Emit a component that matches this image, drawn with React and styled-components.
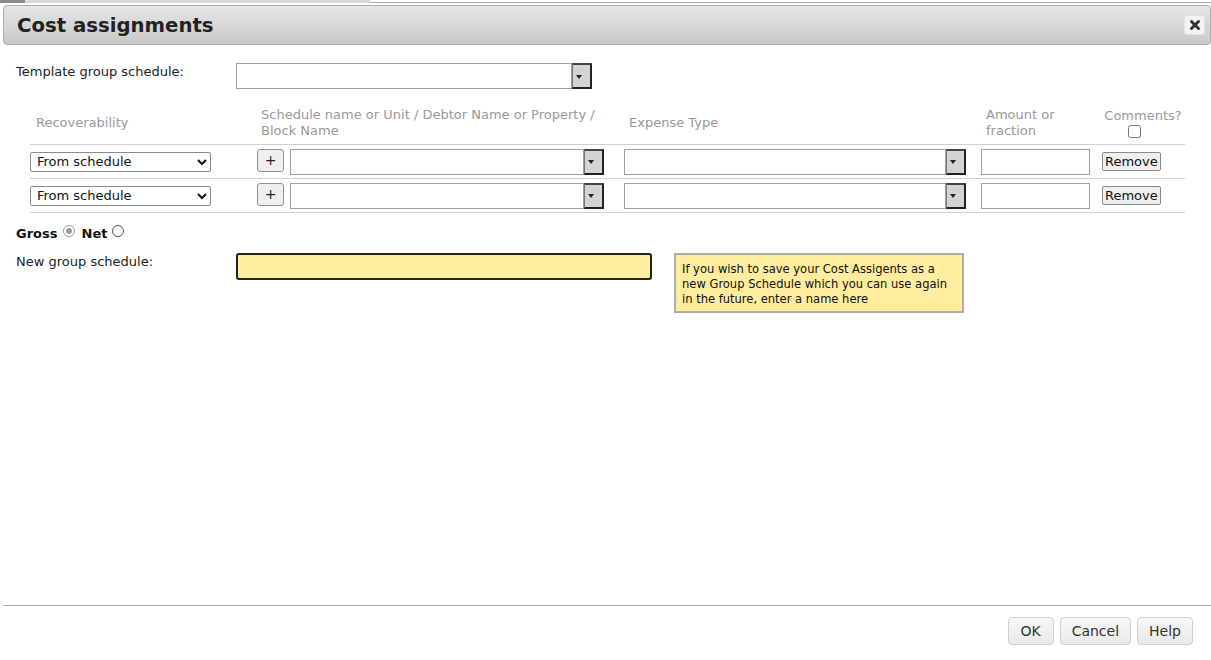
import React from 'react'
import styled, { createGlobalStyle } from 'styled-components';

const GlobalStyle = createGlobalStyle`
  html, body {
    margin: 0;
    padding: 0;
    background: #fff;
  }
  body {
    font-family: "DejaVu Sans", Verdana, sans-serif;
    font-size: 13px;
    color: #222;
  }
`

const recoverRows = [1, 2];

const Combo = ({ width }) => (
    <ComboWrap>
        <ComboInput $w={width} />
        <ComboButton><Arrow /></ComboButton>
    </ComboWrap>
)

const App = () => {
    return (
        <Page>
            <GlobalStyle />
            <TopStrip>
                <StripDark />
                <StripLight />
                <StripRest />
            </TopStrip>
            <TitleBar>
                <Title>Cost assignments</Title>
                <CloseButton aria-label="close">
                    <svg width="12" height="12" viewBox="0 0 12 12">
                        <path d="M2.5 2.5 L9.5 9.5 M9.5 2.5 L2.5 9.5" stroke="#333" strokeWidth="3" strokeLinecap="round" />
                    </svg>
                </CloseButton>
            </TitleBar>

            <Body>
                <FieldRow>
                    <FieldLabel>Template group schedule:</FieldLabel>
                    <Combo width={336} />
                </FieldRow>

                <Grid>
                    <HeadCell $pl={6}><span>Recoverability</span></HeadCell>
                    <HeadCell $pl={4}><span>Schedule name or Unit / Debtor Name or Property /<br />Block Name</span></HeadCell>
                    <HeadCell $pl={5}><span>Expense Type</span></HeadCell>
                    <HeadCell $pl={5}><span>Amount or<br />fraction</span></HeadCell>
                    <CommentsHead>
                        Comments?
                        <CheckBox type="checkbox" />
                    </CommentsHead>

                    {recoverRows.map((r) => (
                        <React.Fragment key={r}>
                            <Cell>
                                <RecoverSelect defaultValue="schedule">
                                    <option value="schedule">From schedule</option>
                                    <option value="none">Non-recoverable</option>
                                </RecoverSelect>
                            </Cell>
                            <Cell>
                                <PlusButton>+</PlusButton>
                                <Combo width={294} />
                            </Cell>
                            <Cell>
                                <Combo width={322} />
                            </Cell>
                            <Cell>
                                <AmountInput />
                            </Cell>
                            <Cell>
                                <RemoveButton>Remove</RemoveButton>
                            </Cell>
                        </React.Fragment>
                    ))}
                </Grid>

                <GrossNet>
                    <b>Gross</b>
                    <Radio type="radio" name="gn" defaultChecked $grey />
                    <b>Net</b>
                    <Radio type="radio" name="gn" />
                </GrossNet>

                <FieldRow $second>
                    <FieldLabel>New group schedule:</FieldLabel>
                    <NewInput />
                    <Hint>
                        If you wish to save your Cost Assigents as a new Group Schedule which you can use again in the future, enter a name here
                    </Hint>
                </FieldRow>
            </Body>

            <Footer>
                <DlgButton>OK</DlgButton>
                <DlgButton>Cancel</DlgButton>
                <DlgButton>Help</DlgButton>
            </Footer>
        </Page>
    )
}

const Page = styled.div`
  width: 1211px;
  height: 660px;
  display: flex;
  flex-direction: column;
  overflow: hidden;
`

const TopStrip = styled.div`
  display: flex;
  height: 3px;
  margin-bottom: 2px;
`
const StripDark = styled.div`
  width: 25px;
  background: #8a8a8a;
`
const StripLight = styled.div`
  width: 345px;
  background: #d8d8d8;
`
const StripRest = styled.div`
  flex: 1;
  border-bottom: 1px solid #a8a8a8;
`

const TitleBar = styled.div`
  margin-left: 3px;
  height: 38px;
  border: 1px solid #acacac;
  border-radius: 4px;
  background: linear-gradient(#e6e6e6, #c9c9c9);
  display: flex;
  align-items: center;
  justify-content: space-between;
  padding: 0 5px 0 13px;
`

const Title = styled.h1`
  margin: 0;
  font-size: 19.7px;
  font-weight: bold;
  color: #222;
`

const CloseButton = styled.button`
  width: 21px;
  height: 20px;
  padding: 0;
  border: 1px solid #e2e2e2;
  border-radius: 3px;
  background: #f3f3f3;
  display: flex;
  align-items: center;
  justify-content: center;
`

const Body = styled.div`
  flex: 1;
  padding: 18px 0 0 16px;
`

const FieldRow = styled.div`
  display: flex;
  align-items: flex-start;
  margin-top: ${p => (p.$second ? '9px' : '0')};
`

const FieldLabel = styled.div`
  width: 220px;
  line-height: 16px;
  padding-top: 1px;
  color: #222;
`

const ComboWrap = styled.div`
  display: inline-flex;
  height: 26px;
`
const ComboInput = styled.input`
  box-sizing: border-box;
  width: ${p => p.$w}px;
  height: 26px;
  border: 1px solid #a0a0a0;
  margin: 0;
  padding: 2px 4px;
  font: inherit;
`
const ComboButton = styled.div`
  box-sizing: border-box;
  width: 20px;
  height: 26px;
  background: #d4d4d4;
  border-top: 2px solid #444;
  border-right: 2px solid #222;
  border-bottom: 2px solid #222;
  border-left: 1px solid #777;
  display: flex;
  align-items: center;
  padding-left: 3px;
`
const Arrow = styled.span`
  width: 0;
  height: 0;
  border-left: 3px solid transparent;
  border-right: 3px solid transparent;
  border-top: 4px solid #222;
  margin-top: 1px;
`

const Grid = styled.div`
  display: grid;
  grid-template-columns: 227px 367px 357px 120px 84px;
  width: 1155px;
  margin: 17px 0 0 14px;
`

const HeadCell = styled.div`
  color: #999;
  line-height: 16px;
  padding: 1px 0 5px ${p => p.$pl}px;
  border-bottom: 1px solid #cfcfcf;
  display: flex;
  align-items: center;
  justify-content: flex-start;
`

const CommentsHead = styled.div`
  color: #999;
  line-height: 16px;
  padding: 1px 0 5px 0;
  border-bottom: 1px solid #cfcfcf;
  display: flex;
  flex-direction: column;
  align-items: center;
  justify-content: center;
`

const CheckBox = styled.input`
  width: 13px;
  height: 13px;
  margin: 1px 18px 0 0;
`

const Cell = styled.div`
  height: 33px;
  border-bottom: 1px solid #cfcfcf;
  display: flex;
  align-items: center;
  gap: 6px;
`

const RecoverSelect = styled.select`
  width: 181px;
  height: 20px;
  font: inherit;
  font-size: 13px;
  color: #111;
  border: 1px solid #8a8a8a;
  border-radius: 2px;
  background: #fff;
  padding: 0 2px;
`

const PlusButton = styled.button`
  width: 27px;
  height: 23px;
  padding: 0;
  border: 1px solid #8f8f8f;
  border-radius: 3px;
  background: #efefef;
  font: inherit;
  font-size: 14px;
  color: #222;
  margin-top: -3px;
`

const AmountInput = styled.input`
  box-sizing: border-box;
  width: 109px;
  height: 26px;
  margin: 0;
  border: 1px solid #a0a0a0;
`

const RemoveButton = styled.button`
  height: 19px;
  padding: 0 2px;
  margin-left: 1px;
  border: 1px solid #8a8a8a;
  border-radius: 2px;
  background: #efefef;
  font: inherit;
  font-size: 13px;
  color: #111;
  line-height: 16px;
`

const GrossNet = styled.div`
  margin-top: 11px;
  display: flex;
  align-items: flex-start;
  line-height: 20px;
  color: #111;
`

const Radio = styled.input`
  appearance: none;
  box-sizing: border-box;
  width: 12px;
  height: 12px;
  margin: 1px 7px 0 5px;
  border-radius: 50%;
  border: 1px solid ${p => (p.$grey ? '#9a9a9a' : '#555')};
  background: #fff;
  position: relative;
  &:checked::after {
    content: '';
    position: absolute;
    left: 2px;
    top: 2px;
    width: 6px;
    height: 6px;
    border-radius: 50%;
    background: #9a9a9a;
  }
`

const NewInput = styled.input`
  box-sizing: border-box;
  width: 416px;
  height: 27px;
  margin: 0;
  border: 2px solid #222;
  border-radius: 3px;
  background: #ffeda0;
  outline: none;
`

const Hint = styled.div`
  box-sizing: border-box;
  width: 290px;
  margin-left: 22px;
  padding: 6px 3px 5px 6px;
  background: #ffec9e;
  border: 2px solid #adadad;
  font-family: "DejaVu Sans Condensed", "DejaVu Sans", sans-serif;
  font-size: 12.8px;
  line-height: 15px;
  color: #111;
`

const Footer = styled.div`
  margin-left: 3px;
  border-top: 1px solid #a8a8a8;
  height: 55px;
  flex-shrink: 0;
  display: flex;
  justify-content: flex-end;
  align-items: flex-start;
  gap: 6px;
  padding: 11px 18px 0 0;
  box-sizing: border-box;
`

const DlgButton = styled.button`
  min-width: 46px;
  height: 28px;
  padding: 0 11px;
  border: 1px solid #cfcfcf;
  border-radius: 4px;
  background: linear-gradient(#f7f7f7, #e9e9e9);
  font-family: "DejaVu Sans", Verdana, sans-serif;
  font-size: 14px;
  color: #333;
`

export default App;
